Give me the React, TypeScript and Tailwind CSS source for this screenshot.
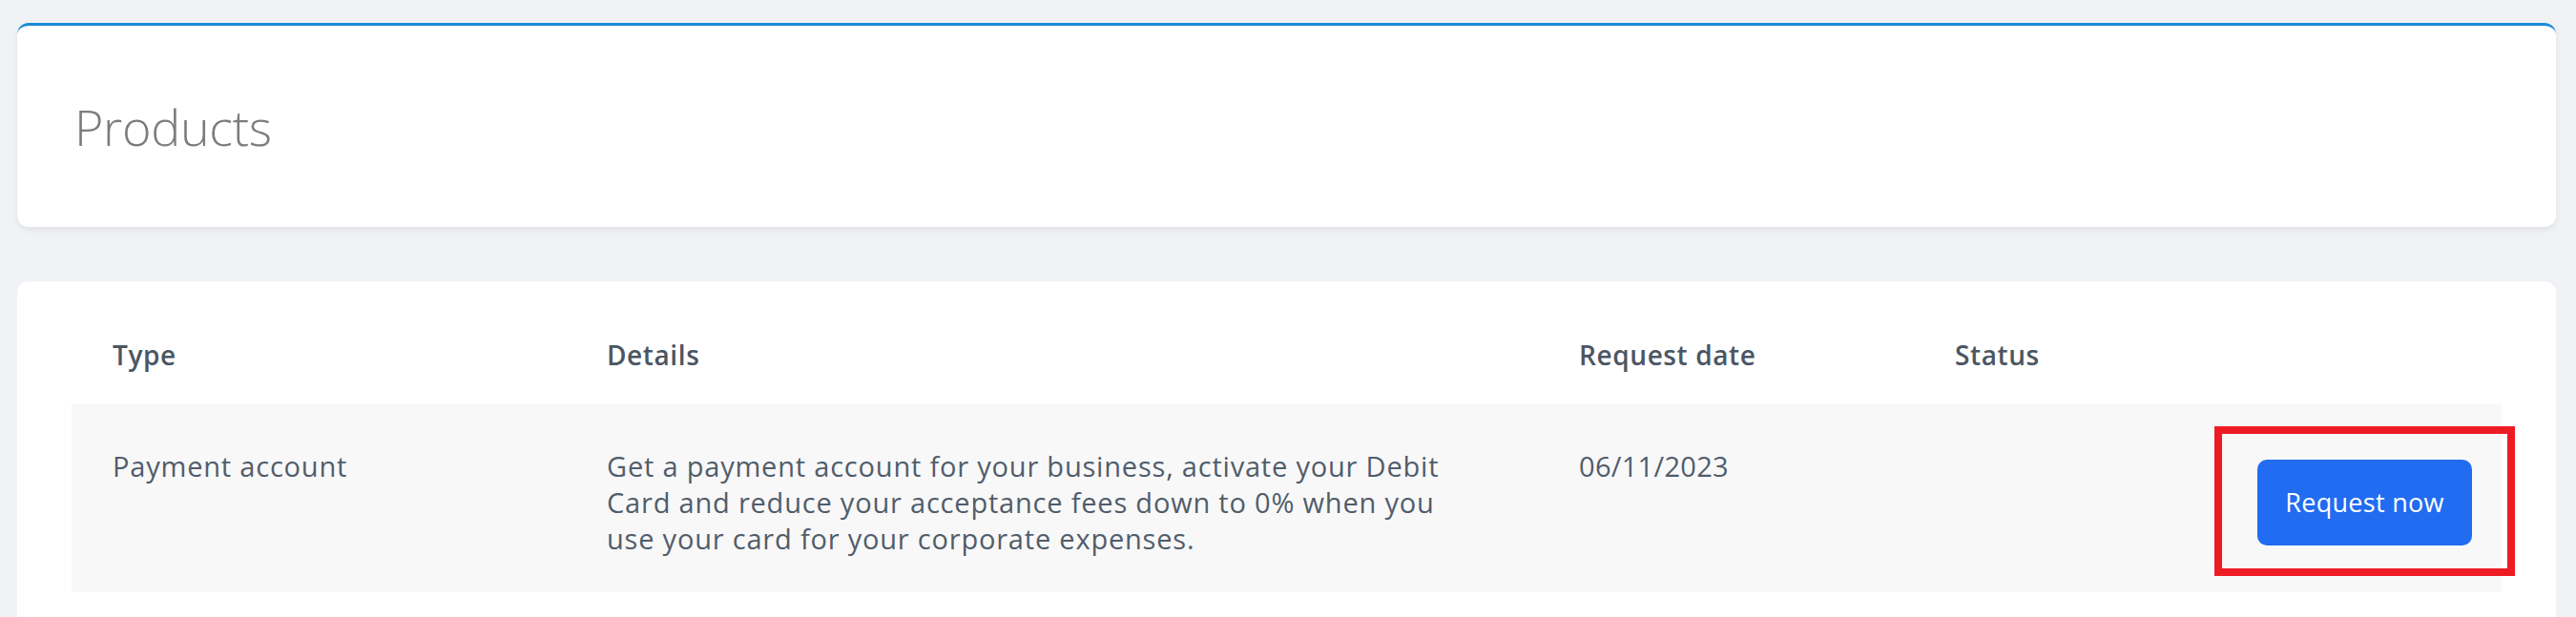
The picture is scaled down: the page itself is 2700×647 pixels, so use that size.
import React from "react";

const rows = [
  {
    type: "Payment account",
    details:
      "Get a payment account for your business, activate your Debit Card and reduce your acceptance fees down to 0% when you use your card for your corporate expenses.",
    date: "06/11/2023",
    status: "",
  },
];

const App = () => {
  return (
    <div className="min-h-screen bg-[#f0f2f5] px-[18px] pr-[21px] pt-[24px] font-['Open_Sans',sans-serif]">
      {/* Header card */}
      <div className="flex h-[214px] items-center rounded-[12px] border-t-[3px] border-[#1b8bd8] bg-white px-[60px] shadow-[0_3px_6px_rgba(0,0,0,0.07)]">
        <h1 className="text-[52px] font-light leading-none tracking-[-0.3px] text-[#7b7c80]">
          Products
        </h1>
      </div>

      {/* Products table */}
      <div className="mt-[57px] rounded-[12px] bg-white px-[57px] pt-[58px] pb-[40px]">
        <table className="w-full table-fixed border-collapse text-left">
          <colgroup>
            <col className="w-[518px]" />
            <col className="w-[1019px]" />
            <col className="w-[394px]" />
            <col className="w-[300px]" />
            <col />
          </colgroup>
          <thead>
            <tr className="text-[28px] font-semibold leading-[38px] tracking-[0.6px] text-[#4b5663]">
              <th className="pb-[33px] pl-[43px] font-semibold">Type</th>
              <th className="pb-[33px] pl-[43px] font-semibold">Details</th>
              <th className="pb-[33px] pl-[43px] font-semibold">Request date</th>
              <th className="pb-[33px] pl-[43px] font-semibold">Status</th>
              <th className="pb-[33px]" />
            </tr>
          </thead>
          <tbody>
            {rows.map((row) => (
              <tr
                key={row.type}
                className="bg-[#f8f8f9] text-[29px] leading-[38px] tracking-[0.8px] text-[#515d6a]"
              >
                <td className="pt-[46px] pb-[37px] pl-[43px] align-top">{row.type}</td>
                <td className="pt-[46px] pb-[37px] pl-[43px] align-top">
                  <p className="max-w-[900px]">{row.details}</p>
                </td>
                <td className="pt-[46px] pb-[37px] pl-[43px] align-top tracking-[0.3px]">{row.date}</td>
                <td className="pt-[46px] pb-[37px] pl-[43px] align-top">{row.status}</td>
                <td className="pt-[46px] pb-[37px] pr-[31px] text-right align-middle">
                  <div className="relative inline-block">
                    <button className="h-[90px] w-[225px] rounded-[10px] bg-[#216cf0] text-[27px] font-normal tracking-[0.3px] text-white">
                      Request now
                    </button>
                    {/* highlight annotation */}
                    <div className="pointer-events-none absolute -top-[35px] -right-[45px] -bottom-[32px] -left-[45px] border-8 border-[#ed1c24]" />
                  </div>
                </td>
              </tr>
            ))}
          </tbody>
        </table>
      </div>
    </div>
  );
};

export default App;
